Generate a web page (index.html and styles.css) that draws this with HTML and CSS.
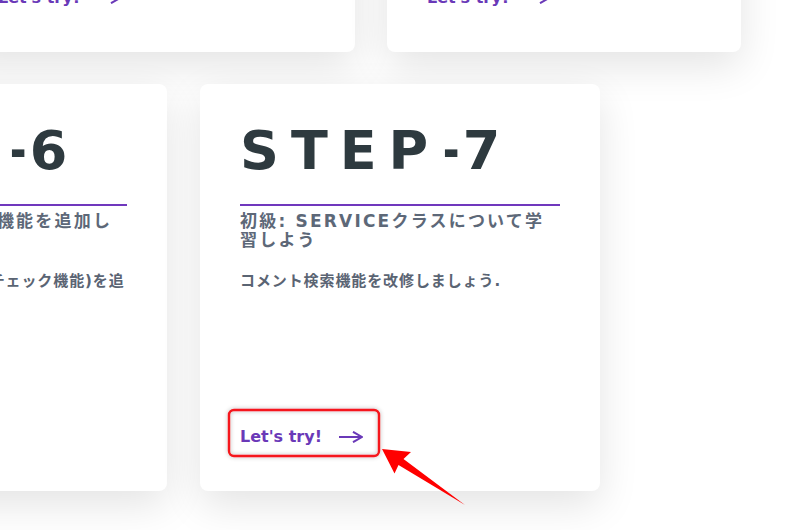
FILE: index.html
```html
<!DOCTYPE html>
<html lang="ja">
  <head>
    <meta charset="UTF-8" />
    <meta name="viewport" content="width=device-width, initial-scale=1.0" />
    <title>STEP一覧</title>
    <link rel="stylesheet" href="styles.css">
  </head>
  <body>
    <main class="steps">
      <div class="row row-top">
        <section class="card card-wide">
          <h2 class="step-title">STEP<span class="dash">-</span>4</h2>
          <p class="step-sub">初級: コメント削除機能を追加しよう</p>
          <p class="step-desc">コメントを削除できるようにしましょう.</p>
          <a class="step-link" href="#">
            Let's try!
            <svg class="link-arrow" width="24" height="12" viewBox="0 0 24 12"><path d="M0 6H23M14 .8L23 6L14 11.2" /></svg>
          </a>
        </section>
        <section class="card card-narrow">
          <h2 class="step-title">STEP<span class="dash">-</span>5</h2>
          <p class="step-sub">初級: コメント編集機能を追加しよう</p>
          <p class="step-desc">コメントを編集できるようにしましょう.</p>
          <a class="step-link" href="#">
            Let's try!
            <svg class="link-arrow" width="24" height="12" viewBox="0 0 24 12"><path d="M0 6H23M14 .8L23 6L14 11.2" /></svg>
          </a>
        </section>
      </div>

      <div class="row row-bottom">
        <section class="card">
          <h2 class="step-title">STEP<span class="dash">-</span>6</h2>
          <p class="step-sub">初級: 文字数チェック機能を追加しよう</p>
          <p class="step-desc">コメント入力検証(文字数チェック機能)を追加しましょう.</p>
          <a class="step-link" href="#">
            Let's try!
            <svg class="link-arrow" width="24" height="12" viewBox="0 0 24 12"><path d="M0 6H23M14 .8L23 6L14 11.2" /></svg>
          </a>
        </section>
        <section class="card">
          <h2 class="step-title">STEP<span class="dash">-</span>7</h2>
          <p class="step-sub">初級: SERVICEクラスについて学習しよう</p>
          <p class="step-desc">コメント検索機能を改修しましょう.</p>
          <a class="step-link" href="#">
            Let's try!
            <svg class="link-arrow" width="24" height="12" viewBox="0 0 24 12"><path d="M0 6H23M14 .8L23 6L14 11.2" /></svg>
          </a>
        </section>
      </div>
    </main>

    <!-- annotation drawn over the screenshot -->
    <svg class="annotation" width="802" height="530" viewBox="0 0 802 530">
      <defs>
        <filter id="soft" x="-20%" y="-40%" width="140%" height="180%">
          <feDropShadow dx="0" dy="0" stdDeviation="2" flood-color="#000" flood-opacity="0.3" />
        </filter>
      </defs>
      <rect x="229" y="410" width="150" height="46" rx="5" fill="none" stroke="#f5141b" stroke-width="2.4" filter="url(#soft)" />
      <polygon points="382,449 411,452 403.5,459 465,505 398.5,465 394.5,473.5" fill="#ff0000" />
    </svg>
  </body>
</html>
```

FILE: styles.css
```css
body {
  margin: 0;
  height: 100vh;
  overflow: hidden;
  background-color: #fff;
  font-family: "DejaVu Sans", "Noto Sans CJK JP", sans-serif;
  font-weight: bold;
}

.steps {
  display: flex;
  flex-direction: column;
  gap: 32px;
  margin-top: -355px;
}

.row {
  display: flex;
  gap: 32px;
}

.row-top {
  margin-left: -42px;
}

.row-bottom {
  margin-left: -233px;
  gap: 33px;
}

.card {
  flex-shrink: 0;
  display: flex;
  flex-direction: column;
  box-sizing: border-box;
  width: 400px;
  min-height: 407px;
  padding: 40px;
  background-color: #fff;
  border-radius: 8px;
  box-shadow: 0 14px 40px rgba(0, 0, 0, 0.11);
}

.card-wide {
  width: 397px;
}

.card-narrow {
  width: 354px;
}

.step-title {
  margin: 0;
  padding-bottom: 26px;
  font-size: 54px;
  line-height: 1;
  letter-spacing: 12px;
  color: #2e3a3f;
  border-bottom: 2px solid #7038bd;
  white-space: nowrap;
}

.step-title .dash {
  display: inline-block;
  letter-spacing: 0;
  transform: scaleX(0.75);
}

.step-sub {
  margin: 6px 0 0;
  font-size: 17px;
  line-height: 19px;
  letter-spacing: 2.2px;
  color: #5d6878;
}

.step-desc {
  margin: 21px 0 0;
  font-size: 15px;
  line-height: 20px;
  letter-spacing: 0.9px;
  color: #5a6473;
}

.step-link {
  margin-top: auto;
  margin-bottom: 5px;
  align-self: flex-start;
  display: inline-flex;
  align-items: center;
  gap: 17px;
  font-size: 16px;
  color: #6a39b8;
  text-decoration: none;
}

.link-arrow path {
  fill: none;
  stroke: #6a39b8;
  stroke-width: 2;
}

.annotation {
  position: absolute;
  top: 0;
  left: 0;
  pointer-events: none;
}
```
